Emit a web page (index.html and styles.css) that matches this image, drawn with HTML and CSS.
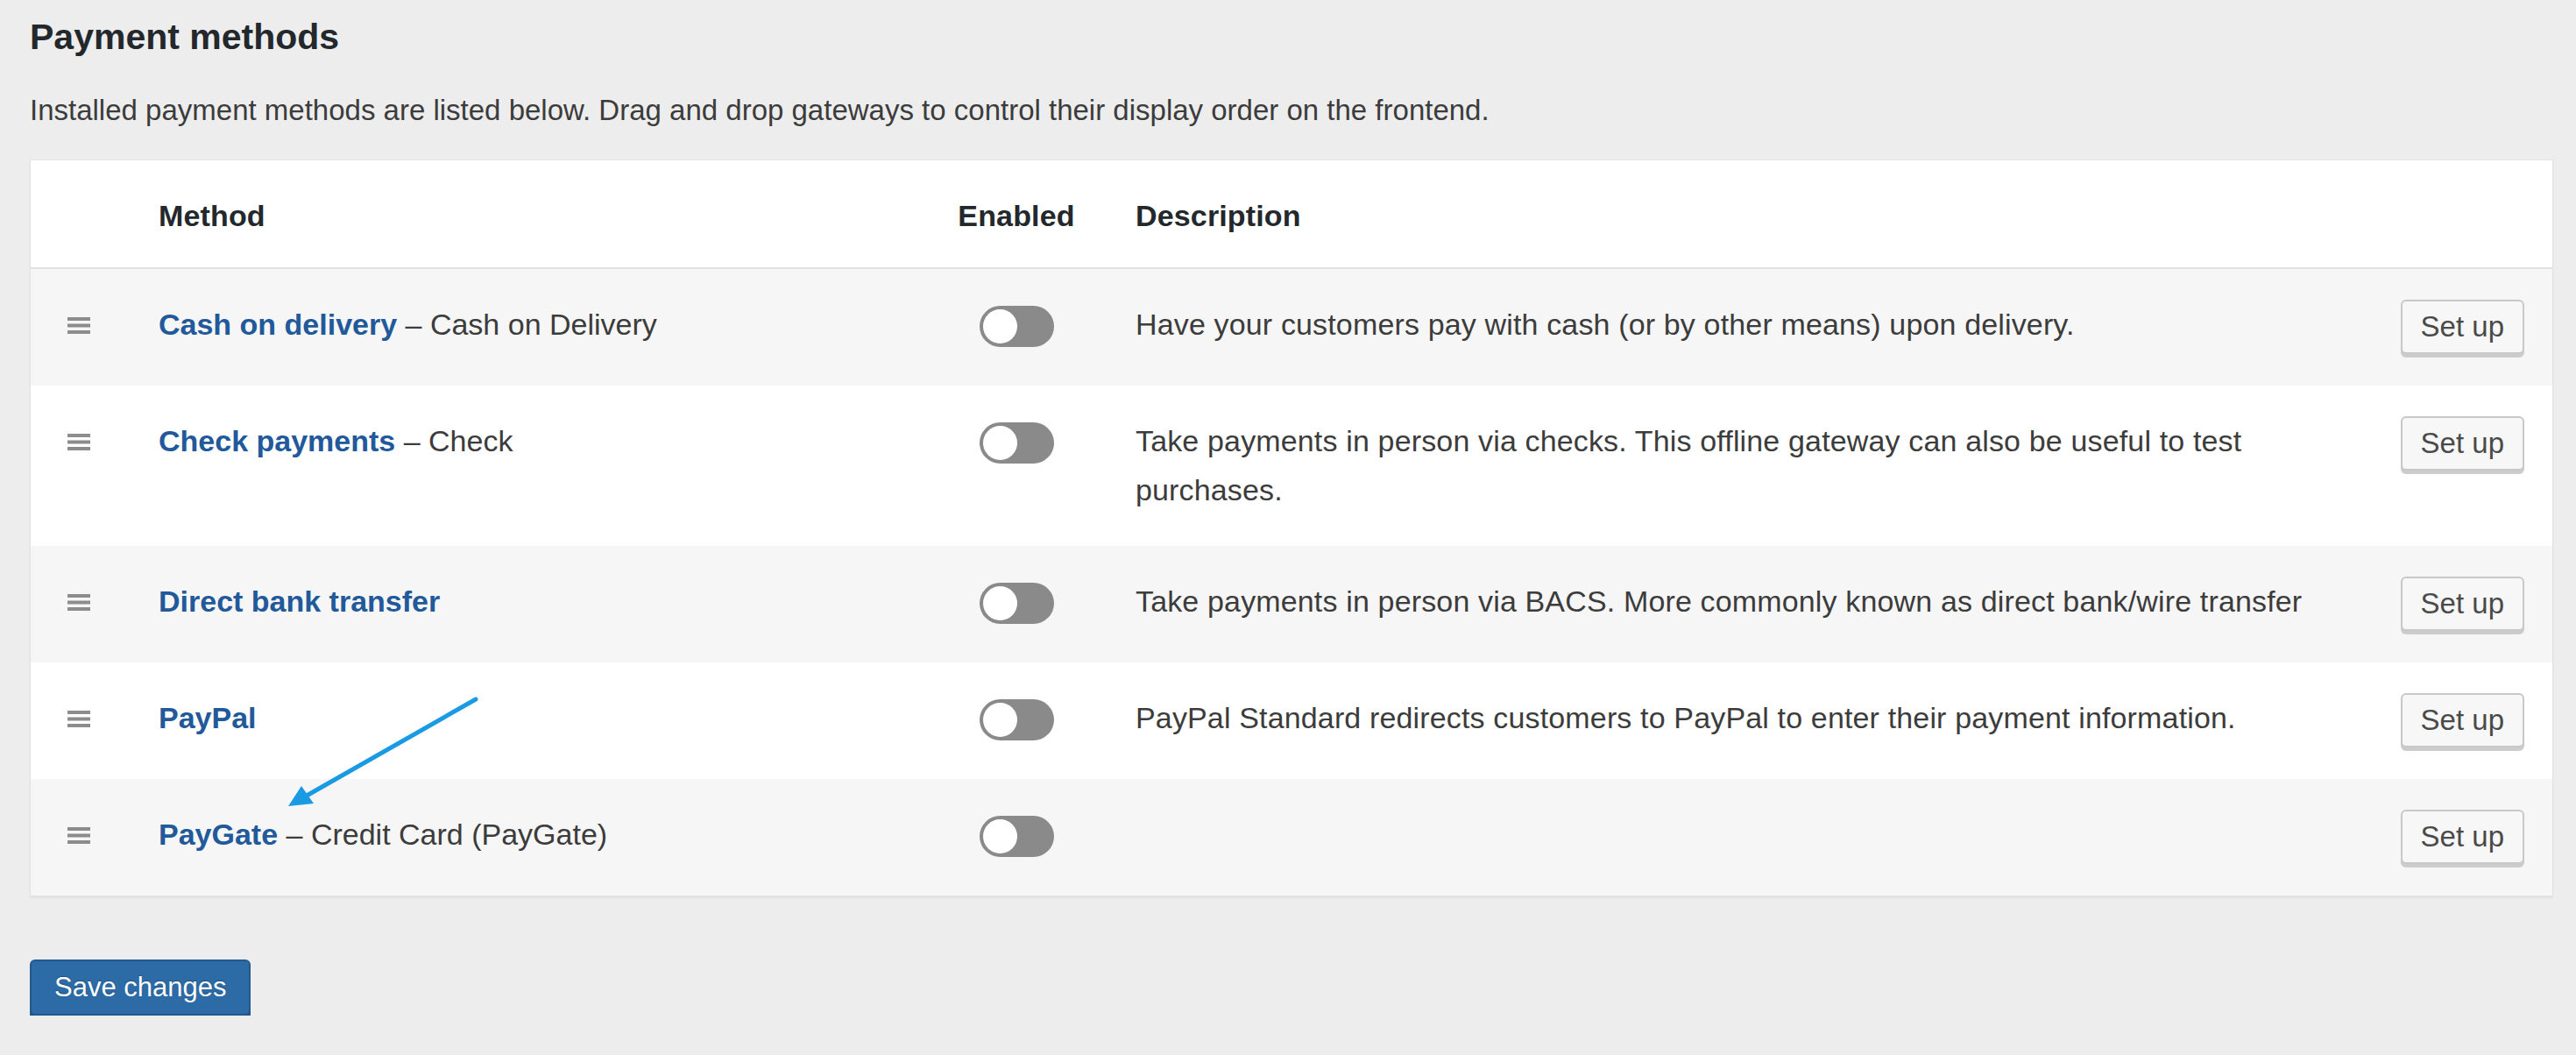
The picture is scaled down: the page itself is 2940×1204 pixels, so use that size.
FILE: index.html
```html
<!DOCTYPE html>
<html lang="en">
<head>
<meta charset="UTF-8">
<title>Payment methods</title>
<link rel="stylesheet" href="styles.css">
</head>
<body>
  <div class="wrap">
    <h2>Payment methods</h2>
    <p class="intro">Installed payment methods are listed below. Drag and drop gateways to control their display order on the frontend.</p>

    <table class="gateways">
      <colgroup>
        <col class="col-sort">
        <col class="col-name">
        <col class="col-status">
        <col class="col-desc">
        <col class="col-action">
      </colgroup>
      <thead>
        <tr>
          <th></th>
          <th>Method</th>
          <th class="status">Enabled</th>
          <th>Description</th>
          <th></th>
        </tr>
      </thead>
      <tbody>
        <tr>
          <td class="sort"><svg class="handle" viewBox="0 0 26 19"><rect y="0" width="26" height="4"/><rect y="7.5" width="26" height="4"/><rect y="15" width="26" height="4"/></svg></td>
          <td class="name"><a href="#">Cash on delivery</a> – Cash on Delivery</td>
          <td class="status"><span class="toggle"></span></td>
          <td class="desc">Have your customers pay with cash (or by other means) upon delivery.</td>
          <td class="action"><button class="button">Set up</button></td>
        </tr>
        <tr>
          <td class="sort"><svg class="handle" viewBox="0 0 26 19"><rect y="0" width="26" height="4"/><rect y="7.5" width="26" height="4"/><rect y="15" width="26" height="4"/></svg></td>
          <td class="name"><a href="#">Check payments</a> – Check</td>
          <td class="status"><span class="toggle"></span></td>
          <td class="desc">Take payments in person via checks. This offline gateway can also be useful to test purchases.</td>
          <td class="action"><button class="button">Set up</button></td>
        </tr>
        <tr>
          <td class="sort"><svg class="handle" viewBox="0 0 26 19"><rect y="0" width="26" height="4"/><rect y="7.5" width="26" height="4"/><rect y="15" width="26" height="4"/></svg></td>
          <td class="name"><a href="#">Direct bank transfer</a></td>
          <td class="status"><span class="toggle"></span></td>
          <td class="desc">Take payments in person via BACS. More commonly known as direct bank/wire transfer</td>
          <td class="action"><button class="button">Set up</button></td>
        </tr>
        <tr>
          <td class="sort"><svg class="handle" viewBox="0 0 26 19"><rect y="0" width="26" height="4"/><rect y="7.5" width="26" height="4"/><rect y="15" width="26" height="4"/></svg></td>
          <td class="name"><a href="#">PayPal</a></td>
          <td class="status"><span class="toggle"></span></td>
          <td class="desc">PayPal Standard redirects customers to PayPal to enter their payment information.</td>
          <td class="action"><button class="button">Set up</button></td>
        </tr>
        <tr>
          <td class="sort"><svg class="handle" viewBox="0 0 26 19"><rect y="0" width="26" height="4"/><rect y="7.5" width="26" height="4"/><rect y="15" width="26" height="4"/></svg></td>
          <td class="name"><a href="#">PayGate</a> – Credit Card (PayGate)</td>
          <td class="status"><span class="toggle"></span></td>
          <td class="desc"></td>
          <td class="action"><button class="button">Set up</button></td>
        </tr>
      </tbody>
    </table>

    <p class="submit"><button class="button-primary">Save changes</button></p>

    <!-- annotation arrow pointing at PayGate -->
    <svg class="arrow" viewBox="0 0 240 140" width="240" height="140">
      <line x1="223" y1="8" x2="30" y2="118" stroke="#1b9ae4" stroke-width="5" stroke-linecap="round"/>
      <polygon points="9,130 24,107 38,127" fill="#1b9ae4"/>
    </svg>
  </div>
</body>
</html>
```

FILE: styles.css
```css
body {
  margin: 0;
  background-color: #ededed;
  font-family: "Liberation Sans", Arial, sans-serif;
  font-size: 33px;
  color: #3c3c3c;
}

.wrap {
  position: relative;
  padding: 16px 26px 0 34px;
}

h2 {
  margin: 0;
  font-size: 41px;
  line-height: 53px;
  font-weight: 700;
  color: #23282d;
}

.intro {
  margin: 32px 0 0;
  line-height: 50px;
}

.gateways {
  width: 100%;
  margin-top: 31px;
  table-layout: fixed;
  border-collapse: separate;
  border-spacing: 0;
  background-color: #fff;
  border: 1px solid #e2e2e2;
  box-shadow: 0 2px 2px rgba(0, 0, 0, 0.05);
  font-size: 34px;
  letter-spacing: 0.15px;
}

.col-sort { width: 122px; }
.col-name { width: 891px; }
.col-status { width: 224px; }
.col-desc { width: 1441px; }

.gateways th {
  padding: 35px 24px 31px;
  line-height: 56px;
  text-align: left;
  font-weight: 700;
  color: #23282d;
  border-bottom: 2px solid #e1e1e1;
}

.gateways td {
  padding: 35px 24px 36px;
  line-height: 56px;
  vertical-align: top;
}

.gateways tbody tr:nth-child(odd) {
  background-color: #f6f6f6;
}

.gateways .status {
  text-align: center;
}

.gateways td.sort {
  padding-left: 42px;
  padding-right: 0;
}

.handle {
  display: block;
  width: 26px;
  height: 19px;
  margin-top: 20px;
  fill: #8c8c8c;
}

.gateways td.name {
  letter-spacing: 0;
}

.name a {
  color: #21599a;
  font-weight: 700;
  text-decoration: none;
}

.toggle {
  position: relative;
  display: block;
  width: 85px;
  height: 47px;
  margin: 7px auto 0;
  border-radius: 24px;
  background-color: #8a8a8a;
}

.toggle::before {
  content: "";
  position: absolute;
  left: 4px;
  top: 4px;
  width: 39px;
  height: 39px;
  border-radius: 50%;
  background-color: #fff;
}

.gateways td.action {
  text-align: right;
  padding-right: 32px;
}

.button {
  display: inline-block;
  vertical-align: top;
  height: 62px;
  padding: 0 21px;
  border: 2px solid #c8c8c8;
  border-radius: 6px;
  background-color: #f7f7f7;
  box-shadow: 0 4px 0 #cccccc;
  font-family: "Liberation Sans", Arial, sans-serif;
  font-size: 33px;
  line-height: 58px;
  color: #4a4a4a;
}

.submit {
  margin: 72px 0 0;
}

.button-primary {
  height: 64px;
  padding: 0 26px;
  border: 2px solid #235a8e;
  border-radius: 6px;
  background-color: #2c6ba6;
  box-shadow: 0 4px 0 #1f5080;
  font-family: "Liberation Sans", Arial, sans-serif;
  font-size: 31px;
  line-height: 60px;
  color: #fff;
  text-shadow: 0 -1px 1px #1f5080;
}

.arrow {
  position: absolute;
  left: 320px;
  top: 790px;
}
```
